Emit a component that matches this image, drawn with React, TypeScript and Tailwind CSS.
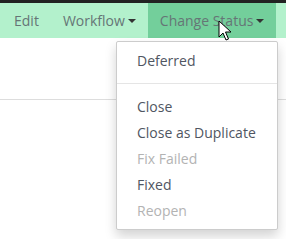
import { useState } from 'react';

const items: { label: string; disabled?: boolean; divider?: boolean }[] = [
    { label: 'Deferred' },
    { label: '', divider: true },
    { label: 'Close' },
    { label: 'Close as Duplicate' },
    { label: 'Fix Failed', disabled: true },
    { label: 'Fixed' },
    { label: 'Reopen', disabled: true },
];

function Caret() {
    return (
        <span className="inline-block ml-[3px] align-middle w-0 h-0 border-x-[4px] border-x-transparent border-t-[4px] border-t-[#333]" />
    );
}

export default function App() {
    const [open] = useState(true);

    return (
        <div className="relative w-[286px] h-[239px] bg-white overflow-hidden font-['Open_Sans',sans-serif] text-[14px]">
            {/* barra superior oscura */}
            <div className="h-[3px] bg-[#222]" />

            {/* navegación */}
            <nav className="flex h-[35px] bg-[#b3f1cc] pl-[2px] text-[#667576]">
                <a className="flex items-center px-[12px] leading-[20px]">Edit</a>
                <a className="flex items-center px-[12px] leading-[20px]">
                    Workflow <Caret />
                </a>
                <div className="relative">
                    <a className="flex items-center h-full px-[12px] leading-[20px] bg-[#73cf9b]">
                        Change Status <Caret />
                    </a>
                </div>
            </nav>

            {/* línea de separación */}
            <div className="mt-[61px] h-px bg-[#ddd]" />

            {open && (
                <ul className="absolute left-[116px] top-[41px] w-[162px] pt-[6px] pb-[5px] bg-white border border-[#ccc] rounded-[2px] shadow-[0_6px_12px_rgba(0,0,0,0.175)]">
                    {items.map((it, i) =>
                        it.divider ? (
                            <li key={i} className="h-px mt-[9px] mb-[10px] bg-[#e5e5e5]" />
                        ) : (
                            <li
                                key={i}
                                className={`px-[20px] py-[3px] leading-[20px] whitespace-nowrap ${
                                    it.disabled ? 'text-[#b3b3b3]' : 'text-[#4f5662]'
                                }`}
                            >
                                {it.label}
                            </li>
                        )
                    )}
                </ul>
            )}

            {/* cursor del ratón */}
            <svg className="absolute left-[218px] top-[20px]" width="14" height="22" viewBox="0 0 14 22">
                <path d="M1 1 L1 17 L5 13 L8 20 L10.5 19 L7.5 12 L13 12 Z" fill="white" stroke="black" strokeWidth="1" strokeLinejoin="round" />
            </svg>
        </div>
    );
}
